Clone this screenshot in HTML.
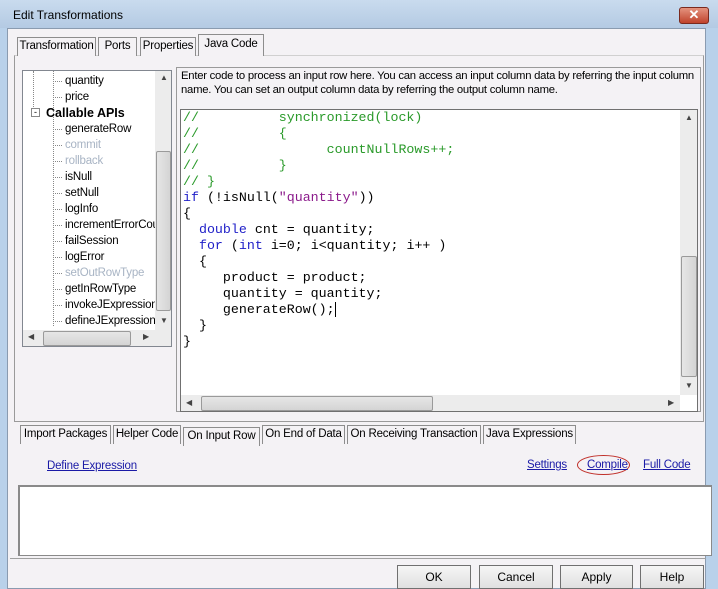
<!DOCTYPE html><html><head><style>
*{box-sizing:border-box;margin:0;padding:0}
body{width:718px;height:589px;overflow:hidden;background:#b9d1ea;font-family:"Liberation Sans",sans-serif;font-size:12px;color:#000;position:relative}
.a{position:absolute}
.win{left:7px;top:28px;width:699px;height:561px;background:#f4f2f5;border:1px solid #8a9bb0}
.title{left:0;top:0;width:718px;height:28px;background:linear-gradient(#c9dbee,#b4cae3)}
.tab{position:absolute;height:19px;border:1px solid #8d8d8d;border-bottom:none;background:#f4f2f5;font-size:11.5px;letter-spacing:-0.2px;line-height:17px;text-align:center;white-space:nowrap;overflow:hidden}
.box{border:1px solid #828790;background:#fff}
.code{font-family:"Liberation Mono",monospace;font-size:13.3px;line-height:16px;white-space:pre}
.g{color:#2a9a2a}.k{color:#1e1ec8}.s{color:#8b1a8b}
.tree div{height:16px;line-height:16px;white-space:nowrap;position:relative;font-size:11.5px;letter-spacing:-0.2px}
.tree div.i:before{content:"";position:absolute;left:24px;top:8px;width:9px;border-top:1px dotted #888}
.dim{color:#a8b4c4}
.btn{position:absolute;top:565px;height:24px;border:1px solid #707070;background:linear-gradient(#f6f6f6,#e0e0e0);text-align:center;line-height:22px;font-size:12px}
a{color:#1a1aa6;text-decoration:underline;font-size:11.5px;letter-spacing:-0.2px}
.sb{background:#ececec}
.thumb{background:linear-gradient(90deg,#e6e6e6,#d4d4d4);border:1px solid #9a9a9a;border-radius:2px}
.thumbh{background:linear-gradient(#e6e6e6,#d4d4d4);border:1px solid #9a9a9a;border-radius:2px}
</style></head><body>
<div class="a title"></div>
<div class="a" style="left:13px;top:8px;font-size:12px">Edit Transformations</div>
<div class="a" style="left:679px;top:7px;width:30px;height:17px;background:linear-gradient(#e4937f,#c0432c);border:1px solid #7a2a1e;border-radius:3px;color:#fff;text-align:center;font-weight:bold;line-height:14px;font-size:13px">✕</div>
<div class="a win"></div>
<div class="a" style="left:14px;top:55px;width:690px;height:367px;border:1px solid #9a9a9a;border-top-color:#d0d0d0;background:#f4f2f5"></div>
<div class="tab" style="left:17px;top:37px;width:79px">Transformation</div>
<div class="tab" style="left:98px;top:37px;width:39px">Ports</div>
<div class="tab" style="left:140px;top:37px;width:56px">Properties</div>
<div class="tab" style="left:198px;top:34px;width:66px;height:22px;padding-top:1px">Java Code</div>
<div class="a box" style="left:22px;top:70px;width:150px;height:277px;overflow:hidden">
<div class="a" style="left:30px;top:0;height:255px;border-left:1px dotted #888"></div>
<div class="a" style="left:10px;top:0;height:40px;border-left:1px dotted #888"></div>
<div class="tree a" style="left:6px;top:2px;width:128px;overflow:hidden">
<div class="i" style="padding-left:36px">quantity</div><div class="i" style="padding-left:36px">price</div>
<div style="font-weight:bold;font-size:12.5px;padding-left:17px;letter-spacing:0"><span style="position:absolute;left:2px;top:3px;width:9px;height:9px;border:1px solid #888;font-size:9px;line-height:6px;text-align:center;font-weight:normal;background:#fff">-</span>Callable APIs</div>
<div class="i" style="padding-left:36px">generateRow</div><div class="i dim" style="padding-left:36px">commit</div><div class="i dim" style="padding-left:36px">rollback</div><div class="i" style="padding-left:36px">isNull</div><div class="i" style="padding-left:36px">setNull</div><div class="i" style="padding-left:36px">logInfo</div><div class="i" style="padding-left:36px">incrementErrorCount</div><div class="i" style="padding-left:36px">failSession</div><div class="i" style="padding-left:36px">logError</div><div class="i dim" style="padding-left:36px">setOutRowType</div><div class="i" style="padding-left:36px">getInRowType</div><div class="i" style="padding-left:36px">invokeJExpression</div><div class="i" style="padding-left:36px">defineJExpression</div>
</div>
<div class="a sb" style="left:132px;top:0;width:17px;height:259px"></div>
<div class="a thumb" style="left:133px;top:80px;width:15px;height:160px"></div>
<div class="a" style="left:137px;top:2px;font-size:8px;color:#444">▲</div>
<div class="a" style="left:137px;top:245px;font-size:8px;color:#444">▼</div>
<div class="a sb" style="left:0;top:259px;width:149px;height:17px"></div>
<div class="a thumbh" style="left:20px;top:260px;width:88px;height:15px"></div>
<div class="a" style="left:5px;top:261px;font-size:8px;color:#444">◀</div>
<div class="a" style="left:120px;top:261px;font-size:8px;color:#444">▶</div>
</div>
<div class="a" style="left:176px;top:67px;width:525px;height:345px;border:1px solid #9a9a9a;background:#f4f2f5"></div>
<div class="a" style="left:181px;top:69px;width:515px;font-size:11.3px;line-height:14px;letter-spacing:-0.25px">Enter code to process an input row here. You can access an input column data by referring the input column name. You can set an output column data by referring the output column name.</div>
<div class="a box" style="left:180px;top:109px;width:518px;height:303px;overflow:hidden;border-color:#707070">
<div class="a code" style="left:2px;top:0px"><span class="g">//          synchronized(lock)
//          {
//                countNullRows++;
//          }
// }</span>
<span class="k">if</span> (!isNull(<span class="s">"quantity"</span>))
{
  <span class="k">double</span> cnt = quantity;
  <span class="k">for</span> (<span class="k">int</span> i=0; i&lt;quantity; i++ )
  {
     product = product;
     quantity = quantity;
     generateRow();<span style="border-left:1px solid #000"></span>
  }
}</div>
<div class="a sb" style="left:499px;top:0;width:18px;height:285px"></div>
<div class="a thumb" style="left:500px;top:146px;width:16px;height:121px"></div>
<div class="a" style="left:504px;top:3px;font-size:8px;color:#444">▲</div>
<div class="a" style="left:504px;top:271px;font-size:8px;color:#444">▼</div>
<div class="a sb" style="left:0;top:285px;width:499px;height:17px"></div>
<div class="a thumbh" style="left:20px;top:286px;width:232px;height:15px"></div>
<div class="a" style="left:5px;top:288px;font-size:8px;color:#444">◀</div>
<div class="a" style="left:487px;top:288px;font-size:8px;color:#444">▶</div>
</div>
<div class="tab" style="left:20px;top:425px;width:91px">Import Packages</div>
<div class="tab" style="left:113px;top:425px;width:68px">Helper Code</div>
<div class="tab" style="left:183px;top:427px;width:77px">On Input Row</div>
<div class="tab" style="left:262px;top:425px;width:83px">On End of Data</div>
<div class="tab" style="left:347px;top:425px;width:134px">On Receiving Transaction</div>
<div class="tab" style="left:483px;top:425px;width:93px">Java Expressions</div>
<div class="a" style="left:47px;top:458px"><a>Define Expression</a></div>
<div class="a" style="left:527px;top:457px"><a>Settings</a></div>
<div class="a" style="left:577px;top:455px;width:53px;height:20px;border:1px solid #c0302a;border-radius:50%"></div>
<div class="a" style="left:587px;top:457px"><a>Compile</a></div>
<div class="a" style="left:643px;top:457px"><a>Full Code</a></div>
<div class="a box" style="left:18px;top:485px;width:694px;height:71px;border-color:#8a8a8a;border-width:2px 1px 1px 2px"></div>
<div class="a" style="left:10px;top:558px;width:696px;height:1px;background:#a0a0a0"></div>
<div class="btn" style="left:397px;width:74px">OK</div>
<div class="btn" style="left:479px;width:74px">Cancel</div>
<div class="btn" style="left:560px;width:73px">Apply</div>
<div class="btn" style="left:640px;width:64px">Help</div>
</body></html>
